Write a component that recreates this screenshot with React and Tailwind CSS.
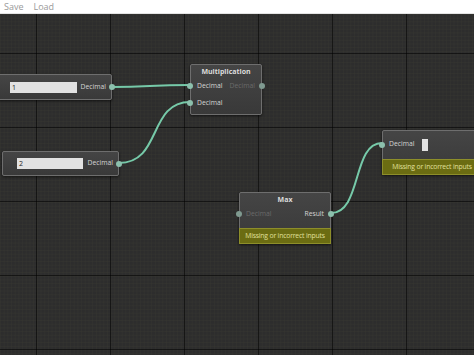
const FONT = "font-['Open_Sans','Noto_Sans',sans-serif]";

function Port({ dim, side }) {
  return (
    <span
      className={
        "absolute top-1/2 -translate-y-1/2 w-[6px] h-[6px] rounded-full " +
        (side === "left" ? "-left-[4px] " : "-right-[4px] ") +
        (dim ? "bg-[#7f9a90]" : "bg-[#8cc0ad]")
      }
    />
  );
}

function Row({ left, right, leftDim, rightDim, className = "" }) {
  return (
    <div className={"relative flex items-center justify-between px-[6px] text-[6.8px] leading-[8px] " + className}>
      {left ? (
        <>
          <span className={leftDim ? "text-[#6a6a6a]" : "text-[#d4d4d4]"}>{left}</span>
          <Port side="left" dim={leftDim} />
        </>
      ) : (
        <span />
      )}
      {right && (
        <>
          <span className={rightDim ? "text-[#6a6a6a]" : "text-[#d4d4d4]"}>{right}</span>
          <Port side="right" dim={rightDim} />
        </>
      )}
    </div>
  );
}

function Warning({ children }) {
  return (
    <div className="h-[16px] mx-[-1px] mb-[-1px] mt-auto bg-[#6b6c12] border border-[#8d8e2a] flex items-center justify-center text-[6.8px] text-[#e0e09c] tracking-tight">
      {children}
    </div>
  );
}

function Node({ className, children }) {
  return (
    <div
      className={
        "absolute flex flex-col rounded-[2px] border border-[#6e6e6e] bg-gradient-to-b from-[#454545] to-[#393939] shadow-[0_1px_3px_rgba(0,0,0,0.6)] " +
        className
      }
    >
      {children}
    </div>
  );
}

function Title({ children }) {
  return (
    <div className="text-center text-[7px] font-bold text-[#dcdcdc] leading-none pt-[3px]">{children}</div>
  );
}

function ValueNode({ className, value, boxWidth }) {
  return (
    <Node className={className + " justify-center"}>
      <div className="relative flex items-center justify-between pr-[5px]">
        <div className={"h-[11px] bg-[#e2e2e2] text-[7px] leading-[11px] text-[#222] pl-[2px] " + boxWidth}>
          {value}
        </div>
        <span className="text-[6.8px] text-[#d4d4d4]">Decimal</span>
        <Port side="right" />
      </div>
    </Node>
  );
}

export default function App() {
  return (
    <div className={"w-[474px] h-[355px] overflow-hidden flex flex-col " + FONT}>
      <div className="h-[14px] bg-white flex items-center gap-[10px] px-[4px] text-[9px] text-[#9a9a9a] leading-none border-b border-[#e4e4e4]">
        <span>Save</span>
        <span>Load</span>
      </div>

      <div className="relative flex-1 bg-[#2d2d2d] [background-image:linear-gradient(to_right,rgba(0,0,0,0.55)_1px,transparent_1px),linear-gradient(to_bottom,rgba(0,0,0,0.55)_1px,transparent_1px),linear-gradient(to_right,rgba(60,60,52,0.3)_1px,transparent_1px),linear-gradient(to_bottom,rgba(60,60,52,0.3)_1px,transparent_1px)] [background-size:74px_74px,74px_74px,3.7px_3.7px,3.7px_3.7px] [background-position:36px_39px,36px_39px,0_0,0_0]">
        <svg className="absolute inset-0" width="474" height="341" viewBox="0 14 474 341">
          <g fill="none" stroke="#76caa9" strokeWidth="2" strokeLinecap="round">
            <path d="M112,87 C150,87 150,85 190,85" />
            <path d="M119,163 C162,163 148,102 190,102" />
            <path d="M331,213 C362,213 352,143 382,143" />
          </g>
        </svg>

        <ValueNode className="left-[-10px] top-[60px] w-[122px] h-[26px] pl-[19px]" value="1" boxWidth="w-[67px]" />
        <ValueNode className="left-[2px] top-[137px] w-[117px] h-[25px] pl-[14px]" value="2" boxWidth="w-[66px]" />

        <Node className="left-[190px] top-[50px] w-[72px] h-[51px] gap-[7px]">
          <Title>Multiplication</Title>
          <Row left="Decimal" right="Decimal" rightDim />
          <Row left="Decimal" className="mt-[2px]" />
        </Node>

        <Node className="left-[239px] top-[178px] w-[92px] h-[52px] gap-[7px]">
          <Title>Max</Title>
          <Row left="Decimal" leftDim right="Result" />
          <Warning>Missing or incorrect inputs</Warning>
        </Node>

        <Node className="left-[382px] top-[116px] w-[100px] h-[45px]">
          <div className="relative flex items-center gap-[7px] px-[6px] h-[27px] text-[6.8px] text-[#d4d4d4]">
            <span>Decimal</span>
            <div className="w-[6px] h-[12px] bg-[#e2e2e2]" />
            <Port side="left" />
          </div>
          <Warning>Missing or incorrect inputs</Warning>
        </Node>
      </div>
    </div>
  );
}
